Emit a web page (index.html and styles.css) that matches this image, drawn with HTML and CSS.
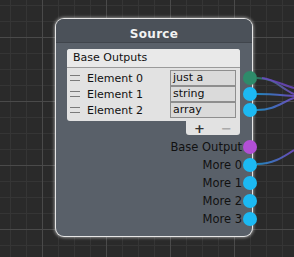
FILE: index.html
```html
<!DOCTYPE html>
<html lang="en">
<head>
    <meta charset="UTF-8">
    <title>Source node</title>
    <link rel="stylesheet" href="styles.css">
</head>
<body>
    <div class="canvas">
        <svg class="wires" width="294" height="257" viewBox="0 0 294 257">
            <defs>
                <linearGradient id="w-green" x1="0" x2="1" y1="0" y2="0">
                    <stop offset="0" stop-color="#2a8a6c"/>
                    <stop offset="1" stop-color="#7a4fd8"/>
                </linearGradient>
                <linearGradient id="w-blue" x1="0" x2="1" y1="0" y2="0">
                    <stop offset="0" stop-color="#1f9ee0"/>
                    <stop offset="1" stop-color="#7a4fd8"/>
                </linearGradient>
            </defs>
            <path d="M257 78 C 275 78, 280 88, 294 94" stroke="url(#w-green)"/>
            <path d="M257 94 C 270 94, 280 95, 294 96" stroke="url(#w-blue)"/>
            <path d="M257 110 C 275 110, 282 102, 294 98" stroke="url(#w-blue)"/>
            <path d="M262 78 C 275 80, 285 86, 294 88" stroke="#6e48c8"/>
            <path d="M257 164 C 272 164, 282 158, 294 150" stroke="url(#w-blue)"/>
        </svg>

        <div class="node">
            <div class="node-title">Source</div>
            <div class="node-body">
                <div class="list">
                    <div class="list-head">Base Outputs</div>
                    <div class="list-rows">
                        <div class="list-row">
                            <span class="handle"></span>
                            <span class="row-label">Element 0</span>
                            <span class="field">just a</span>
                            <span class="port port-green"></span>
                        </div>
                        <div class="list-row">
                            <span class="handle"></span>
                            <span class="row-label">Element 1</span>
                            <span class="field">string</span>
                            <span class="port port-blue"></span>
                        </div>
                        <div class="list-row">
                            <span class="handle"></span>
                            <span class="row-label">Element 2</span>
                            <span class="field">array</span>
                            <span class="port port-blue"></span>
                        </div>
                    </div>
                </div>
                <div class="list-tools">
                    <span class="tool">+</span>
                    <span class="tool tool-off">&minus;</span>
                </div>

                <div class="outputs">
                    <div class="out"><span>Base Output</span><span class="port port-purple"></span></div>
                    <div class="out"><span>More 0</span><span class="port port-blue"></span></div>
                    <div class="out"><span>More 1</span><span class="port port-blue"></span></div>
                    <div class="out"><span>More 2</span><span class="port port-blue"></span></div>
                    <div class="out"><span>More 3</span><span class="port port-blue"></span></div>
                </div>
            </div>
        </div>
    </div>
</body>
</html>
```

FILE: styles.css
```css
body {
    margin: 0;
    font-family: 'DejaVu Sans', 'Noto Sans', sans-serif;
    font-size: 11px;
}

.canvas {
    position: relative;
    width: 294px;
    height: 257px;
    overflow: hidden;
    background-color: #2a2a2a;
    background-image:
        linear-gradient(90deg, #4a4a4a 1px, transparent 1px),
        linear-gradient(0deg, #4a4a4a 1px, transparent 1px),
        linear-gradient(90deg, #353535 1px, transparent 1px),
        linear-gradient(0deg, #353535 1px, transparent 1px);
    background-size: 64px 64px, 64px 64px, 16px 16px, 16px 16px;
    background-position: 42px 0, 0 38px, 10px 0, 0 6px;
}

.wires {
    position: absolute;
    left: 0;
    top: 0;
}

.wires path {
    fill: none;
    stroke-width: 2;
    opacity: 0.8;
}

.node {
    position: absolute;
    left: 56px;
    top: 19px;
    width: 196px;
    height: 217px;
    background: #596069;
    border-radius: 8px;
    box-shadow: 0 0 0 1px #e6e6e6, 0 0 3px 2px rgba(255, 255, 255, 0.45);
}

.node-title {
    height: 19px;
    padding-top: 4px;
    line-height: 22px;
    text-align: center;
    color: #f2f2f2;
    font-weight: bold;
    font-size: 12px;
    letter-spacing: 0.3px;
    background: #4b5159;
    border-radius: 8px 8px 0 0;
    border-bottom: 1px solid #40454c;
}

.node-body {
    padding: 6px 12px 0 11px;
}

.list {
    background: #e2e2e2;
    border-radius: 3px 3px 0 3px;
}

.list-head {
    height: 18px;
    line-height: 17px;
    padding-left: 6px;
    color: #111;
    background: #e9e9e9;
    border-bottom: 1px solid #9a9a9a;
    border-radius: 3px 3px 0 0;
}

.list-rows {
    padding: 2px 4px 3px 3px;
}

.list-row {
    position: relative;
    display: flex;
    align-items: center;
    height: 16px;
}

.handle {
    width: 10px;
    height: 4px;
    margin-right: 7px;
    border-top: 1px solid #7a7a7a;
    border-bottom: 1px solid #7a7a7a;
}

.row-label {
    flex: 1;
    color: #111;
}

.field {
    width: 62px;
    height: 14px;
    line-height: 14px;
    padding-left: 2px;
    color: #111;
    background: #dadada;
    border: 1px solid #8e8e8e;
}

.port {
    flex: none;
    width: 14px;
    height: 14px;
    border-radius: 50%;
}

.list-row .port {
    position: absolute;
    right: -21px;
    top: 1px;
}

.port-green { background: #2e8b6a; }
.port-blue { background: #1cb9f3; }
.port-purple { background: #b24fd6; }

.list-tools {
    display: flex;
    justify-content: space-around;
    width: 54px;
    height: 14px;
    margin-left: auto;
    background: #e2e2e2;
    border-radius: 0 0 3px 3px;
    font-weight: bold;
    font-size: 13px;
    line-height: 15px;
    color: #333;
}

.tool-off {
    color: #aaa;
}

.outputs {
    margin-top: 3px;
    margin-right: -17px;
}

.out {
    display: flex;
    justify-content: flex-end;
    align-items: center;
    gap: 1px;
    height: 18px;
    color: #111;
    font-size: 11.5px;
}
```
